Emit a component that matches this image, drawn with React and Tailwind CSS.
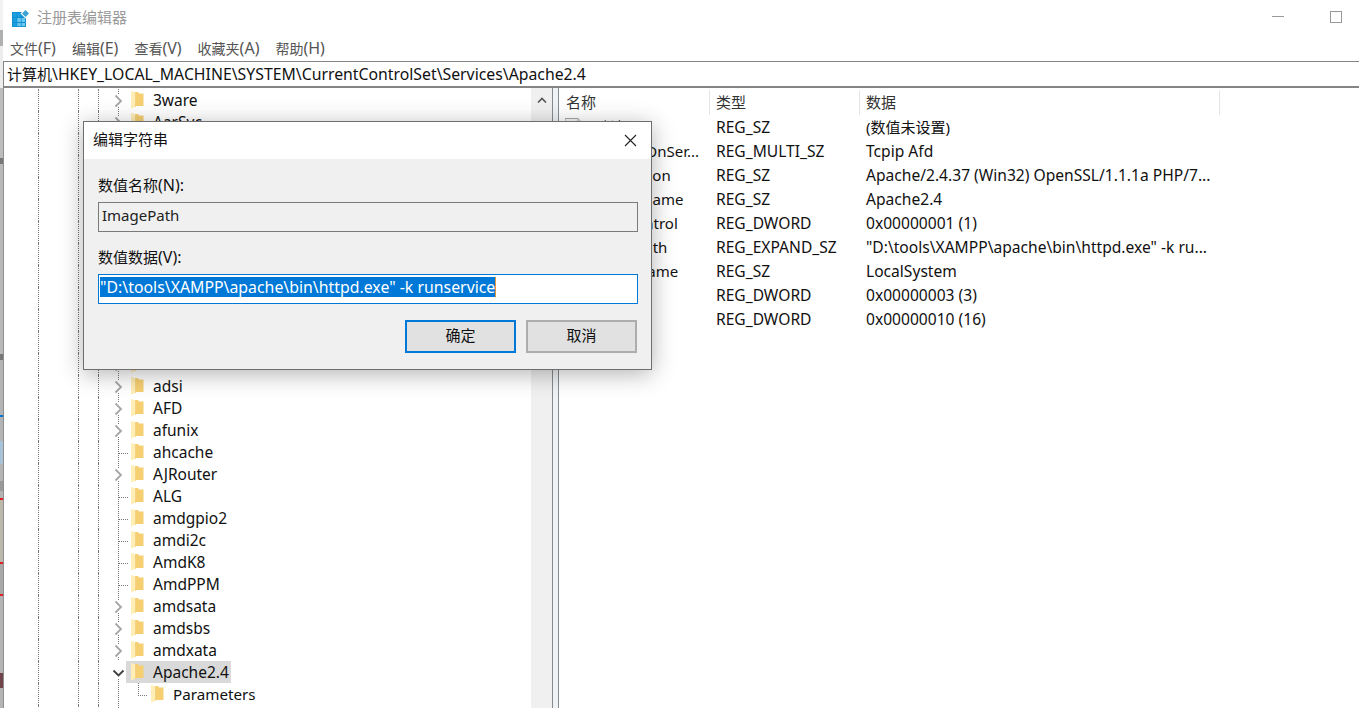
const font = "font-['Noto_Sans','Noto_Sans_CJK_SC',sans-serif]";

// rows 2-11 sit fully behind the dialog, so they have no visible name
const treeItems = [
  ['3ware', true], ['AarSvc', true], ['', false], ['', true], ['', true],
  ['', true], ['', true], ['', true], ['', true], ['', true],
  ['', true], ['', true], ['ADP80XX', true],
  ['adsi', true], ['AFD', true], ['afunix', true], ['ahcache', false], ['AJRouter', true],
  ['ALG', false], ['amdgpio2', false], ['amdi2c', false], ['AmdK8', false], ['AmdPPM', false],
  ['amdsata', true], ['amdsbs', true], ['amdxata', true],
];

const values = [
  ['(默认)', 'REG_SZ', '(数值未设置)'],
  ['DependOnSer...', 'REG_MULTI_SZ', 'Tcpip Afd'],
  ['Description', 'REG_SZ', 'Apache/2.4.37 (Win32) OpenSSL/1.1.1a PHP/7...'],
  ['DisplayName', 'REG_SZ', 'Apache2.4'],
  ['ErrorControl', 'REG_DWORD', '0x00000001 (1)'],
  ['ImagePath', 'REG_EXPAND_SZ', '"D:\\tools\\XAMPP\\apache\\bin\\httpd.exe" -k ru...'],
  ['ObjectName', 'REG_SZ', 'LocalSystem'],
  ['', 'REG_DWORD', '0x00000003 (3)'],
  ['', 'REG_DWORD', '0x00000010 (16)'],
];

const menus = [
  ['文件', '(F)'],
  ['编辑', '(E)'],
  ['查看', '(V)'],
  ['收藏夹', '(A)'],
  ['帮助', '(H)'],
];

function RegIcon() {
  return (
    <svg width="18" height="18" viewBox="0 0 18 18" className="shrink-0">
      <path d="M0 0.5h13l4 4v13H0z" fill="#f4f4f4" stroke="#a8a8a8" />
      <path d="M13 0.5v4h4" fill="#e2e2e2" stroke="#a8a8a8" />
      <rect x="8" y="5" width="4" height="3" fill="#d9534f" />
    </svg>
  );
}

function AppIcon() {
  return (
    <svg width="18" height="18" viewBox="0 0 18 18" className="shrink-0">
      <rect x="0" y="3" width="14" height="15" fill="#0f8fd2" />
      <rect x="1" y="4" width="3.5" height="4" fill="#1c9edf" />
      <rect x="5.3" y="4" width="3.5" height="4" fill="#1c9edf" />
      <rect x="1" y="9" width="3.5" height="4" fill="#1c9edf" />
      <rect x="5.3" y="9" width="3.5" height="4" fill="#6cc7ee" />
      <rect x="9.6" y="9" width="3.5" height="4" fill="#6cc7ee" />
      <rect x="1" y="14" width="3.5" height="3.2" fill="#1c9edf" />
      <rect x="5.3" y="14" width="3.5" height="3.2" fill="#6cc7ee" />
      <rect x="9.6" y="14" width="3.5" height="3.2" fill="#6cc7ee" />
      <path d="M13.5 -0.5L18.5 4.5L13.5 9.5L8.5 4.5z" fill="#ffffff" />
      <path d="M13.5 1L17 4.5L13.5 8L10 4.5z" fill="#3aa3d8" />
    </svg>
  );
}

function Folder() {
  return (
    <svg width="13" height="18" viewBox="0 0 13 18" className="shrink-0">
      <path d="M3 1h4l1 1.5h4.5V15H3z" fill="#f6cf72" />
      <path d="M0 0L5 1.2V15.5L0 17.5z" fill="#ffeeb5" />
      <path d="M5 1.2V15.5L4 16V1z" fill="#f2d384" />
    </svg>
  );
}

// one 20px cell that carries the tree line of the deepest guide, chevron on top
function Branch({ kind }) {
  return (
    <svg width="20" height="22" viewBox="0 0 20 22" className="shrink-0">
      {kind === 'closed' && (
        <>
          <path d="M10.5 0V5M10.5 18V22" stroke="#777" strokeDasharray="1 1" shapeRendering="crispEdges" />
          <path d="M7.5 6.5L13 12L7.5 17.5" fill="none" stroke="#a6a6a6" strokeWidth="1.8" />
        </>
      )}
      {kind === 'leaf' && (
        <path d="M10.5 0V22M11 12.5H20" stroke="#777" strokeDasharray="1 1" shapeRendering="crispEdges" fill="none" />
      )}
      {kind === 'open' && (
        <>
          <path d="M10.5 18V22" stroke="#777" strokeDasharray="1 1" shapeRendering="crispEdges" />
          <path d="M5.5 9.5L10.5 14.5L15.5 9.5" fill="none" stroke="#404040" strokeWidth="1.8" />
        </>
      )}
      {kind === 'line' && (
        <path d="M10.5 0V22" stroke="#777" strokeDasharray="1 1" shapeRendering="crispEdges" />
      )}
    </svg>
  );
}

function Guides() {
  return (
    <div className="flex shrink-0 pl-[34px]">
      <div className="w-10 border-l border-dotted border-[#777]" />
      <div className="w-5 border-l border-dotted border-[#777]" />
      <div className="w-[10px] border-l border-dotted border-[#777]" />
    </div>
  );
}

function TreeRow({ name, kind, selected }) {
  return (
    <div className="flex h-[22px] items-stretch">
      <Guides />
      <Branch kind={kind} />
      <div className={`-ml-[2px] flex items-center gap-[9px] pl-[5px] pr-[2px] ${selected ? 'bg-[#d9d9d9]' : ''}`}>
        <Folder />
        <span className="whitespace-nowrap">{name}</span>
      </div>
    </div>
  );
}

function Tree() {
  return (
    <div className="h-full w-[528px] shrink-0 overflow-hidden border-l border-[#8f8f8f] pt-px text-[15.5px] leading-[22px] text-[#111]">
      {treeItems.map(([name, hasKids], i) => (
        <TreeRow key={i} name={name} kind={hasKids ? 'closed' : 'leaf'} />
      ))}
      <TreeRow name="Apache2.4" kind="open" selected />
      <div className="flex h-[22px] items-stretch">
        <Guides />
        <Branch kind="line" />
        <svg width="20" height="22" viewBox="0 0 20 22" className="shrink-0">
          <path d="M10.5 0V12.5H20" fill="none" stroke="#777" strokeDasharray="1 1" shapeRendering="crispEdges" />
        </svg>
        <div className="flex items-center gap-[9px] pl-[3px]">
          <Folder />
          <span className="text-[15.2px]">Parameters</span>
        </div>
      </div>
      <div className="flex h-[22px] items-stretch">
        <Guides />
        <Branch kind="line" />
      </div>
    </div>
  );
}

function ValueList() {
  return (
    <div className="min-w-0 flex-1 bg-white text-[15.6px] text-[#111]">
      <div className="flex h-[27px] pt-[2px] text-[15px] text-[#333]">
        <div className="flex w-[151px] items-center border-r border-[#e5e5e5] pl-[7px]">名称</div>
        <div className="flex w-[150px] items-center border-r border-[#e5e5e5] pl-[6px]">类型</div>
        <div className="flex w-[360px] items-center border-r border-[#e5e5e5] pl-[6px]">数据</div>
      </div>
      {values.map(([name, type, data], i) => (
        <div key={i} className="flex h-6 items-center whitespace-nowrap">
          <div className="flex w-[151px] items-center gap-[7px] pl-[6px] text-[15px]">
            <RegIcon />
            <span>{name}</span>
          </div>
          <div className="w-[150px] pl-[6px] pt-[2px]">{type}</div>
          <div className={i === 0 ? 'pl-[6px] text-[15px]' : 'pl-[6px] pt-[2px]'}>{data}</div>
        </div>
      ))}
    </div>
  );
}

function EditDialog() {
  return (
    <div className="absolute left-[83px] top-[121px] flex h-[249px] w-[569px] flex-col border border-[#6e6e6e] bg-[#f0f0f0] text-[15px] text-[#111] shadow-[0_4px_22px_rgba(0,0,0,0.3)]">
      <div className="flex h-[37px] shrink-0 items-center justify-between bg-white pl-[9px] pr-[14px]">
        <span className="-mt-[2px]">编辑字符串</span>
        <svg width="13" height="13" viewBox="0 0 13 13">
          <path d="M1 1L12 12M12 1L1 12" stroke="#222" strokeWidth="1.1" />
        </svg>
      </div>
      <div className="flex flex-col pl-[14px] pr-[13px] pt-4">
        <div className="flex h-5 items-center">数值名称<span className="text-[16px]">(N):</span></div>
        <div className="mt-[7px] flex h-[30px] items-center border border-[#7a7a7a] pb-[3px] pl-[3px] text-[#222]">ImagePath</div>
        <div className="mt-[15px] flex h-5 items-center">数值数据<span className="text-[16px]">(V):</span></div>
        <div className="mt-[7px] flex h-[30px] items-center border border-[#0078d7] bg-white pb-[4px] pl-px">
          <span className="whitespace-nowrap border-r border-[#e8973a] bg-[#0078d7] text-[15.85px] leading-[20px] text-white">"D:\tools\XAMPP\apache\bin\httpd.exe" -k runservice</span>
        </div>
        <div className="mt-4 flex justify-end gap-[10px] pr-px">
          <div className="flex h-[33px] w-[111px] items-center justify-center border-2 border-[#0078d7] bg-[#e1e1e1] pb-[2px]">确定</div>
          <div className="flex h-[33px] w-[111px] items-center justify-center border-2 border-[#adadad] bg-[#e1e1e1] pb-[2px]">取消</div>
        </div>
      </div>
    </div>
  );
}

// sliver of the window behind, down the left edge
function BehindStrip() {
  return (
    <div className="flex h-full w-[3px] shrink-0 flex-col bg-[#b4b4b4]">
      <div className="h-[30px] bg-[#f2f2f2]" />
      <div className="h-4 bg-[#b0b0b0]" />
      <div className="h-[42px] bg-[#ededed]" />
      <div className="h-[70px] bg-[#bdbdbd]" />
      <div className="h-[6px] bg-[#777]" />
      <div className="h-[190px] bg-[#b9b9b9]" />
      <div className="h-[6px] bg-[#777]" />
      <div className="h-[55px] bg-[#b4b4b4]" />
      <div className="h-[2px] bg-[#0078d7]" />
      <div className="h-6 bg-[#b4b4b4]" />
      <div className="h-[23px] bg-[#a9c3d8]" />
      <div className="h-[17px] bg-[#b4b4b4]" />
      <div className="h-[10px] bg-[#9a9a9a]" />
      <div className="h-[7px] bg-[#b4b4b4]" />
      <div className="h-[2px] bg-[#e02020]" />
      <div className="h-[62px] bg-[#bdb8ac]" />
      <div className="h-[2px] bg-[#e02020]" />
      <div className="h-[30px] bg-[#a8a8a8]" />
      <div className="h-[2px] bg-[#e02020]" />
      <div className="h-[77px] bg-[#b4b4b4]" />
      <div className="h-[15px] bg-[#70444a]" />
    </div>
  );
}

export default function App() {
  return (
    <div className={`relative flex h-[708px] w-[1359px] overflow-hidden bg-white ${font}`}>
      <BehindStrip />
      <div className="flex min-w-0 flex-1 flex-col">
        <div className="flex h-9 shrink-0 items-center pl-[9px] pr-[17px] text-[15px] text-[#999]">
          <AppIcon />
          <span className="-mt-[2px] ml-[7px]">注册表编辑器</span>
          <div className="ml-auto flex gap-[46px] self-start pt-[11px]">
            <div className="mt-[5px] h-px w-3 bg-[#999]" />
            <div className="h-3 w-3 border border-[#999]" />
          </div>
        </div>
        <div className="flex h-[25px] shrink-0 items-center gap-4 pb-[2px] pl-[7px] text-[14px] text-[#555]">
          {menus.map(([label, key]) => (
            <span key={key}>{label}<span className="text-[16px]">{key}</span></span>
          ))}
        </div>
        <div className="flex h-[27px] shrink-0 items-center border-b-2 border-l border-t border-[#858585] pl-[3px] pt-px text-[15px] text-[#111]">
          计算机<span className="text-[15.8px]">\HKEY_LOCAL_MACHINE\SYSTEM\CurrentControlSet\Services\Apache2.4</span>
        </div>
        <div className="flex min-h-0 flex-1">
          <Tree />
          <div className="flex w-[21px] shrink-0 justify-center bg-[#f0f0f0] pt-[9px]">
            <svg width="10" height="6" viewBox="0 0 10 6">
              <path d="M1 5.5L5 1.5L9 5.5" fill="none" stroke="#555" strokeWidth="1.6" />
            </svg>
          </div>
          <div className="w-[7px] shrink-0 border-x border-[#868b8f] bg-[#f0f3f5]" />
          <ValueList />
        </div>
      </div>
      <EditDialog />
    </div>
  );
}
